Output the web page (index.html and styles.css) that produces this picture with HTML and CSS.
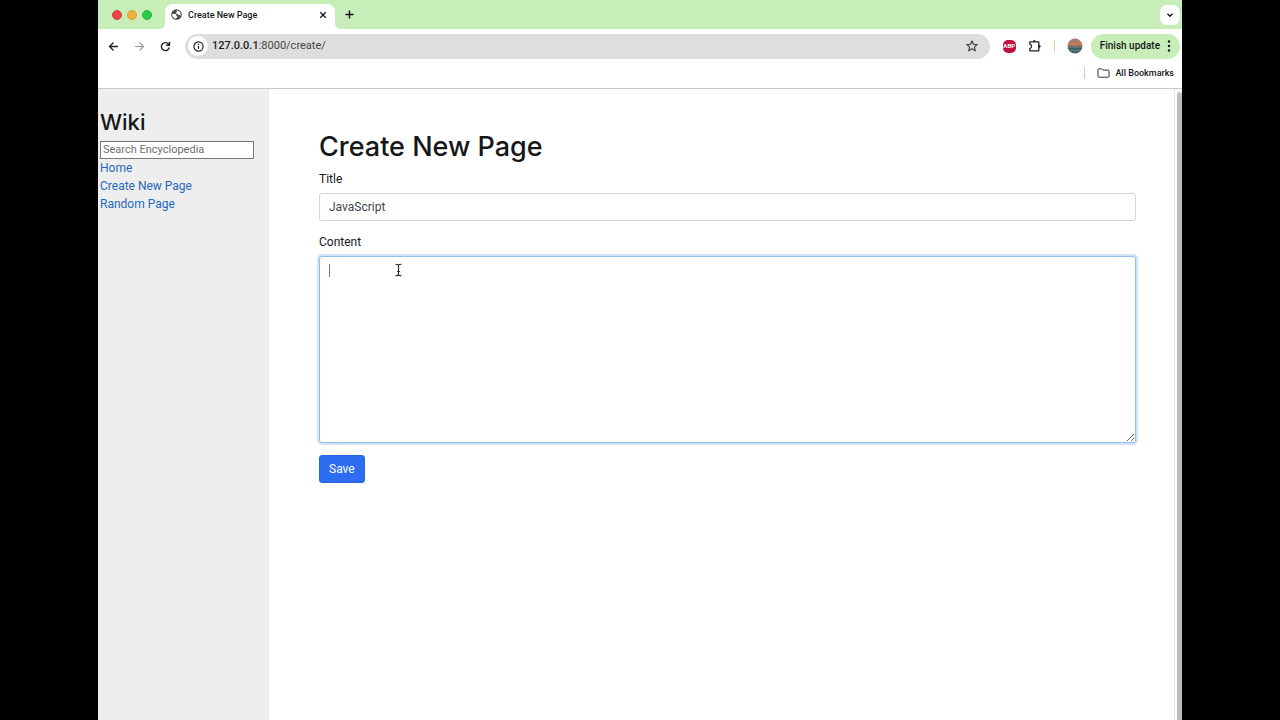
FILE: index.html
```html
<!DOCTYPE html>
<html lang="en">
<head>
<meta charset="utf-8">
<meta name="viewport" content="width=device-width, initial-scale=1">
<title>Create New Page</title>
<link rel="stylesheet" href="styles.css">
</head>
<body>
<div class="window">
  <header class="chrome">
    <div class="tabstrip">
      <div class="lights"><span class="light red"></span><span class="light amber"></span><span class="light green"></span></div>
      <div class="tab">
        <svg width="11" height="11" viewBox="0 0 11 11"><circle cx="5.500" cy="5.500" r="5.300" fill="#474d52"/><path d="M1.200 5.100h2.500c1 0 1.700.5 1.700 1.400 0 .6.800.5.800 1.100v.8c-1 .5-1.200.7-1.300 1.400-2.200-.3-3.900-2-3.700-4.700zM5.400 1.500c1.900-.3 3.500.9 4.100 2.600.3 1 .3 1.900 0 2.700-.6-.3-.8-1-1.600-1-.7 0-.8-.9-1.400-.9-.8 0-1.300-.3-1.300-1 0-.9.900-.7.900-1.300 0-.5-.5-.6-.7-1.100z" fill="#fff"/></svg>
        <span class="tab-title">Create New Page</span>
        <button class="icon-btn" type="button" aria-label="Close tab"><svg width="8" height="8" viewBox="0 0 8 8" stroke="#151515" stroke-width="1.300"><path d="M1.300 1.300l5.400 5.400M6.700 1.300L1.300 6.700"/></svg></button>
      </div>
      <button class="icon-btn new-tab" type="button" aria-label="New tab"><svg width="9" height="9" viewBox="0 0 9 9" stroke="#151515" stroke-width="1.400"><path d="M4.500.5v8M.5 4.500h8"/></svg></button>
      <button class="icon-btn tab-search" type="button" aria-label="Search tabs"><svg width="8" height="8" viewBox="0 0 8 8" fill="none" stroke="#151515" stroke-width="1.400"><path d="M1.500 2.700L4 5.200l2.500-2.500"/></svg></button>
    </div>
    <div class="toolbar">
      <div class="nav">
        <button class="icon-btn" type="button" aria-label="Back"><svg width="11" height="11" viewBox="0 0 11 11" fill="none" stroke="#222" stroke-width="1.300"><path d="M10 5.500H1.500M5.500 1.500l-4 4 4 4"/></svg></button>
        <button class="icon-btn" type="button" aria-label="Forward"><svg width="11" height="11" viewBox="0 0 11 11" fill="none" stroke="#999" stroke-width="1.100"><path d="M1 5.500h8.500M5.500 1.500l4 4-4 4"/></svg></button>
        <button class="icon-btn" type="button" aria-label="Reload"><svg width="11" height="11" viewBox="0 0 11 11" fill="none" stroke="#222" stroke-width="1.400"><path d="M9.300 6.400A4 4 0 1 1 8.600 3.200L9 3.700M9.500.8v3.400H6.200"/></svg></button>
      </div>
      <div class="omnibox">
        <button class="icon-btn site-info" type="button" aria-label="Site information"><svg width="11" height="11" viewBox="0 0 11 11" fill="none" stroke="#222" stroke-width="1.200"><circle cx="5.500" cy="5.500" r="4.600"/><path d="M5.500 5v3M5.500 2.700v1.200"/></svg></button>
        <span class="url"><b>127.0.0.1</b>:8000/create/</span>
        <button class="icon-btn" type="button" aria-label="Bookmark this page"><svg width="12" height="12" viewBox="0 0 12 12" fill="none" stroke="#444" stroke-width="1.200" stroke-linejoin="round"><path d="M6 .9l1.500 3.400 3.700.3-2.800 2.500.9 3.700L6 8.800l-3.300 2 .9-3.700L.8 4.600l3.700-.3z"/></svg></button>
      </div>
      <div class="extensions">
        <button class="icon-btn abp" type="button">ABP</button>
        <button class="icon-btn" type="button" aria-label="Extensions"><svg width="14" height="14" viewBox="0 0 14 14" fill="none" stroke="#222" stroke-width="1.300" stroke-linejoin="round"><path d="M1.800 2.800h9v9h-9V9.600c2.300-.4 2.300-4.200 0-4.600z"/><path d="M5.100 2.500a1.200 1.200 0 0 1 2.400 0zM11.200 6.100a1.200 1.200 0 0 1 0 2.400z" fill="#222" stroke-width=".5"/></svg></button>
        <span class="divider"></span>
        <button class="icon-btn" type="button" aria-label="Profile"><svg width="16" height="16" viewBox="0 0 16 16"><defs><clipPath id="face"><circle cx="8" cy="8" r="7.500"/></clipPath></defs><g clip-path="url(#face)"><path fill="#a87c6c" d="M0 0h16v5H0z"/><path fill="#cf7650" d="M0 5h16v3H0z"/><path fill="#66756c" d="M0 8l4-1 4 1 4-1 4 1v3H0z"/><path fill="#3d6568" d="M0 10h16v6H0z"/><path stroke="#768176" d="M3 12.500h10"/></g></svg></button>
      </div>
      <button class="update" type="button">Finish update<svg width="4" height="14" viewBox="0 0 4 14" fill="#151515"><circle cx="2" cy="2.500" r="1.200"/><circle cx="2" cy="7" r="1.200"/><circle cx="2" cy="11.500" r="1.200"/></svg></button>
    </div>
    <div class="bookmarks">
      <span class="divider"></span>
      <button class="bookmark-btn" type="button"><svg width="13" height="10" viewBox="0 0 13 10" fill="none" stroke="#333" stroke-linejoin="round"><path d="M1 1.500C1 1 1.200.8 1.600.8h3l1.300 1.300h5.300c.5 0 .8.300.8.700v5.700c0 .5-.3.700-.8.700H1.700c-.5 0-.7-.2-.7-.7z"/></svg>All Bookmarks</button>
    </div>
  </header>
  <div class="page">
    <nav class="sidebar">
      <h2 class="brand">Wiki</h2>
      <input class="search" type="text" placeholder="Search Encyclopedia" aria-label="Search Encyclopedia">
      <a href="#">Home</a>
      <a href="#">Create New Page</a>
      <a href="#">Random Page</a>
    </nav>
    <main class="main">
      <h1 class="heading">Create New Page</h1>
      <form>
        <label class="label" for="title">Title</label>
        <input class="field" id="title" type="text" value="JavaScript">
        <label class="label" for="content">Content</label>
        <div class="editor">
          <textarea class="field content" id="content"></textarea>
          <span class="caret"></span>
          <svg class="pointer" width="9" height="14" viewBox="0 0 9 14" fill="none" stroke="#222" stroke-width="1.100"><path d="M1.500 1.200c1.800 0 3 .4 3 1.500 0-1.100 1.200-1.500 3-1.500M4.500 2.500v9M1.500 12.800c1.800 0 3-.4 3-1.500 0 1.100 1.200 1.500 3 1.500M3.200 8.500h2.600"/></svg>
        </div>
        <button class="save" type="button">Save</button>
      </form>
    </main>
    <div class="scrollbar"><div class="thumb"></div></div>
  </div>
</div>
</body>
</html>
```
FILE: styles.css
```css
* { box-sizing: border-box; }
body {
  margin: 0;
  padding: 0 98px;
  background: #000;
  color: #151719;
  font: 12px/18px Roboto, "Liberation Sans", sans-serif;
}
button, input, textarea { font: inherit; color: inherit; }
svg { display: block; flex: none; }
.window { display: flex; flex-direction: column; min-height: 100vh; background: #fff; }
.icon-btn {
  display: flex; align-items: center; justify-content: center; flex: none;
  padding: 0; border: 0; background: none;
}

.chrome { border-bottom: 1px solid #c9c9c9; font-size: 9px; font-weight: 500; }
.tabstrip { display: flex; align-items: center; height: 29px; background: #c7edb9; }
.lights { display: flex; gap: 5px; padding-left: 14px; }
.light { width: 10px; height: 10px; border-radius: 50%; }
.red { background: #ec4545; border: 1px solid #d73b3b; }
.amber { background: #f0b13b; border: 1px solid #dc9e30; }
.green { background: #2ecb43; border: 1px solid #27b53a; }
.tab {
  position: relative; align-self: flex-end;
  display: flex; align-items: center; gap: 6px;
  width: 170px; height: 25px; margin-left: 13px; padding: 0 8px 4px 6px;
  background: #fff; border-radius: 8px 8px 0 0;
}
.tab::before, .tab::after {
  content: ""; position: absolute; bottom: 0; width: 6px; height: 6px;
}
.tab::before { left: -6px; background: radial-gradient(circle at 0 0, transparent 6px, #fff 6px); }
.tab::after { right: -6px; background: radial-gradient(circle at 100% 0, transparent 6px, #fff 6px); }
.tab-title { flex: 1; }
.new-tab { margin-left: 10px; }
.tab-search { width: 20px; height: 20px; margin: 0 2px 0 auto; border-radius: 7px; background: #fff; }

.toolbar { display: flex; align-items: center; height: 34px; padding: 0 2px 0 10px; }
.nav { display: flex; gap: 15px; }
.omnibox {
  display: flex; align-items: center; flex: 1; height: 25px;
  margin-left: 14px; padding: 0 12px 0 3px; border-radius: 13px; background: #dedede;
}
.site-info { width: 20px; height: 20px; border-radius: 50%; background: #fff; }
.url { flex: 1; margin-left: 4px; font-size: 11px; font-weight: 400; line-height: 20px; color: #444; }
.url b { font-weight: 500; color: #1b1b1b; }
.extensions { display: flex; align-items: center; gap: 12px; padding: 0 8px 0 13px; }
.abp { width: 13px; height: 13px; border-radius: 5px; background: #bf113f; color: #fff; font-size: 6px; font-weight: 700; }
.divider { width: 1px; height: 12px; background: #b9dfad; }
.update {
  display: flex; align-items: center; gap: 7px; height: 25px; padding: 0 9px;
  border: 0; border-radius: 13px; background: #c7edb9; font-size: 10px; font-weight: 500;
}
.bookmarks { display: flex; align-items: center; justify-content: flex-end; gap: 12px; height: 25px; padding: 0 8px 5px 0; }
.bookmark-btn { display: flex; align-items: center; gap: 5px; padding: 0; border: 0; background: none; }

.page { display: flex; flex: 1; }
.sidebar { flex: none; width: 171px; padding: 18px 2px; background: #eee; }
.sidebar a { display: block; color: #2468bd; text-decoration: none; }
.brand { margin: 0 0 3px; font-family: Inter, sans-serif; font-size: 22px; line-height: 31px; font-weight: 500; }
.search {
  display: block; width: 154px; height: 18px; padding: 0 2px;
  border: 1px solid #777; border-radius: 0; background: #fff; font-size: 11px;
}
.search::placeholder { color: #707070; opacity: 1; }
.main { flex: 1; min-width: 0; padding: 41px 38px 41px 50px; }
.heading { margin: 0 0 6px; font-family: Inter, sans-serif; font-size: 27px; line-height: 34px; font-weight: 500; }
.label { display: block; margin-bottom: 5px; }
.field {
  display: block; width: 100%; height: 28px; margin-bottom: 12px; padding: 4px 9px;
  border: 1px solid #d2d5d8; border-radius: 3px; background: #fff; outline: 0; color: #40464c;
}
.editor { position: relative; }
.content { height: 187px; border-color: #94bde8; box-shadow: 0 0 0 2px #d1e4f7; resize: vertical; }
.caret { position: absolute; left: 10px; top: 8px; width: 1px; height: 13px; background: #777; }
.pointer { position: absolute; left: 75px; top: 7px; }
.save { display: block; height: 28px; padding: 0 9px; border: 1px solid #2864e0; border-radius: 3px; background: #2d6df2; color: #fff; }
.scrollbar { flex: none; display: flex; width: 8px; padding: 3px 0 0 2px; border-left: 1px solid #e8e8e8; background: #fbfbfb; }
.thumb { flex: 1; border-radius: 3px 3px 0 0; background: #bdbdbd; }
```
